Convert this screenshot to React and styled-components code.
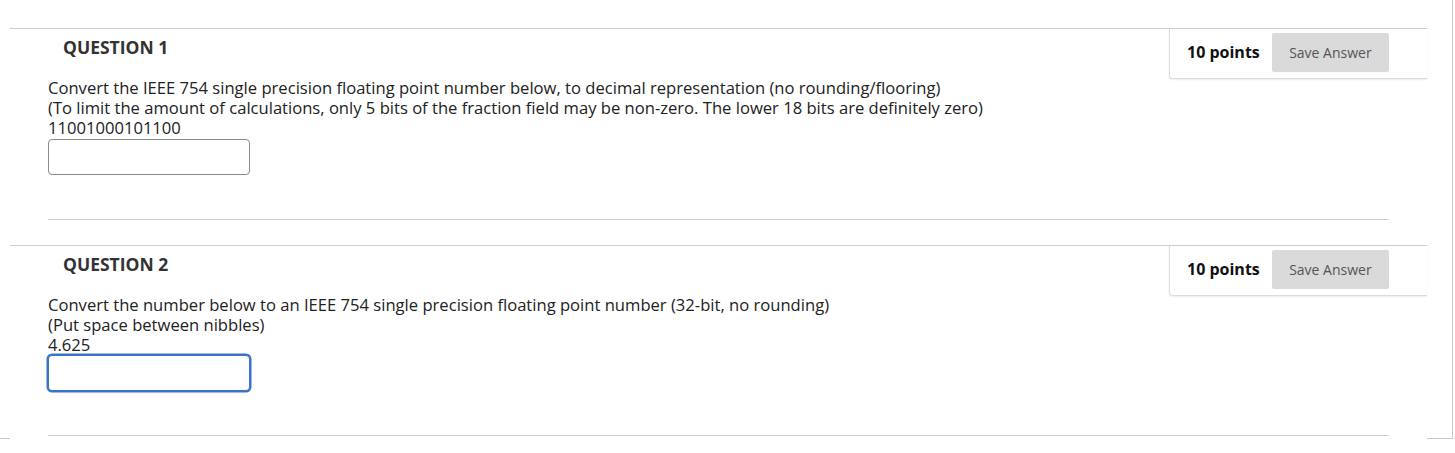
import React from "react";
import styled, { createGlobalStyle } from "styled-components";

const Global = createGlobalStyle`
  html, body {
    margin: 0;
    padding: 0;
  }
  body {
    background: linear-gradient(#ffffff 438px, #f4f4f4 438px);
    font-family: "Open Sans", "Liberation Sans", sans-serif;
    color: #262626;
    overflow: hidden;
  }
`;

const Frame = styled.div`
  box-sizing: border-box;
  width: 1453px;
  height: 439px;
  background: #fff;
  border-right: 1px solid #c9c9c9;
  border-bottom: 1px solid #c9c9c9;
  padding-top: 28px;
`;

const Column = styled.div`
  margin-left: 10px;
  width: 1417px;
  min-height: 425px;
  background: #fff;
`;

const Question = styled.section`
  & + & {
    margin-top: 25px;
  }
`;

const Header = styled.div`
  display: flex;
  justify-content: space-between;
  align-items: flex-start;
  border-top: 1px solid #cfcfcf;
`;

const Title = styled.h2`
  margin: 0;
  padding: 6px 0 0 53px;
  font-size: 17.5px;
  font-weight: 700;
  color: #333;
  line-height: 24px;
`;

const PointsBox = styled.div`
  display: flex;
  align-items: center;
  gap: 12px;
  width: 258px;
  box-sizing: border-box;
  padding: 4px 38px 6px 17px;
  border-left: 1px solid #dcdcdc;
  border-bottom: 1px solid #dcdcdc;
  border-bottom-left-radius: 4px;
  box-shadow: 0 1px 2px rgba(0, 0, 0, 0.08);
  background: #fff;
`;

const Points = styled.span`
  font-size: 16px;
  font-weight: 700;
  color: #111;
  white-space: nowrap;
  line-height: 20px;
  margin-top: -2px;
`;

const SaveButton = styled.button`
  width: 119px;
  height: 39px;
  border: none;
  border-radius: 2px;
  background: #dadada;
  color: #555;
  font-family: "Open Sans", "Liberation Sans", sans-serif;
  font-size: 14px;
  padding: 0;
`;

const Body = styled.div`
  margin: 0 38px;
  padding-bottom: 44px;
  border-bottom: 1px solid #cfcfcf;
`;

const Prompt = styled.div`
  margin-top: -1px;
  font-size: 16.6px;
  line-height: 20px;
  color: #222;
`;

const Answer = styled.input`
  display: block;
  box-sizing: border-box;
  width: 202px;
  height: 36px;
  margin-top: ${(p) => (p.$focused ? "0" : "1px")};
  border: 1px solid ${(p) => (p.$focused ? "#3a72c7" : "#8a8a8a")};
  border-radius: 4px;
  box-shadow: ${(p) => (p.$focused ? "0 0 0 1.5px #3a72c7" : "none")};
  outline: none;
  background: #fff;
`;

const questions = [
  {
    title: "QUESTION 1",
    lines: [
      "Convert the IEEE 754 single precision floating point number below, to decimal representation (no rounding/flooring)",
      "(To limit the amount of calculations, only 5 bits of the fraction field may be non-zero. The lower 18 bits are definitely zero)",
      "11001000101100",
    ],
    focused: false,
  },
  {
    title: "QUESTION 2",
    lines: [
      "Convert the number below to an IEEE 754 single precision floating point number (32-bit, no rounding)",
      "(Put space between nibbles)",
      "4.625",
    ],
    focused: true,
  },
];

export default function App() {
  return (
    <>
      <Global />
      <Frame>
        <Column>
          {questions.map((q) => (
            <Question key={q.title}>
              <Header>
                <Title>{q.title}</Title>
                <PointsBox>
                  <Points>10 points</Points>
                  <SaveButton type="button">Save Answer</SaveButton>
                </PointsBox>
              </Header>
              <Body>
                <Prompt>
                  {q.lines.map((l, i) => (
                    <div key={i}>{l}</div>
                  ))}
                </Prompt>
                <Answer type="text" $focused={q.focused} />
              </Body>
            </Question>
          ))}
        </Column>
      </Frame>
    </>
  );
}
